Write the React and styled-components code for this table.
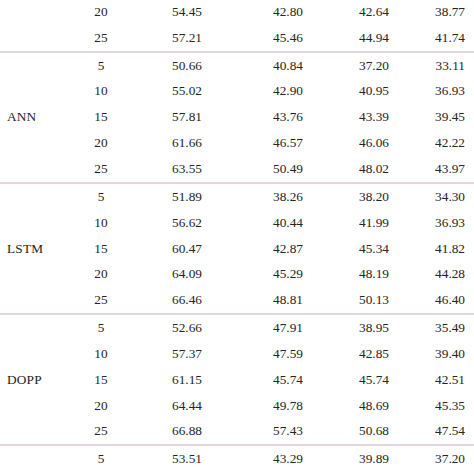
import { createGlobalStyle, styled } from "styled-components";

const GlobalStyle = createGlobalStyle`
  html, body {
    margin: 0;
    padding: 0;
    background: #ffffff;
    overflow: hidden;
  }
`;

const Table = styled.div`
  width: 474px;
  margin-top: -1px;
  font-family: "Liberation Serif", "Times New Roman", serif;
  font-size: 13.3px;
  color: #242424;
`;

const Group = styled.div`
  display: grid;
  grid-template-columns: 58px 86px 86px 116px 56px 1fr;
  grid-auto-rows: 25.85px;
  border-top: ${(props) => (props.first ? "none" : "2px solid #e2d6da")};
`;

const Label = styled.div`
  grid-column: 1;
  grid-row: ${(props) => `1 / span ${props.span}`};
  display: flex;
  align-items: center;
  padding-left: 7px;
  letter-spacing: 0.2px;
`;

const Cell = styled.div`
  display: flex;
  align-items: center;
  justify-content: ${(props) => (props.last ? "flex-end" : "center")};
  padding-right: ${(props) => (props.last ? "9px" : "0")};
  grid-column: ${(props) => props.col};
`;

const groups = [
  {
    label: "",
    rows: [
      ["20", "54.45", "42.80", "42.64", "38.77"],
      ["25", "57.21", "45.46", "44.94", "41.74"],
    ],
  },
  {
    label: "ANN",
    rows: [
      ["5", "50.66", "40.84", "37.20", "33.11"],
      ["10", "55.02", "42.90", "40.95", "36.93"],
      ["15", "57.81", "43.76", "43.39", "39.45"],
      ["20", "61.66", "46.57", "46.06", "42.22"],
      ["25", "63.55", "50.49", "48.02", "43.97"],
    ],
  },
  {
    label: "LSTM",
    rows: [
      ["5", "51.89", "38.26", "38.20", "34.30"],
      ["10", "56.62", "40.44", "41.99", "36.93"],
      ["15", "60.47", "42.87", "45.34", "41.82"],
      ["20", "64.09", "45.29", "48.19", "44.28"],
      ["25", "66.46", "48.81", "50.13", "46.40"],
    ],
  },
  {
    label: "DOPP",
    rows: [
      ["5", "52.66", "47.91", "38.95", "35.49"],
      ["10", "57.37", "47.59", "42.85", "39.40"],
      ["15", "61.15", "45.74", "45.74", "42.51"],
      ["20", "64.44", "49.78", "48.69", "45.35"],
      ["25", "66.88", "57.43", "50.68", "47.54"],
    ],
  },
  {
    label: "",
    rows: [["5", "53.51", "43.29", "39.89", "37.20"]],
  },
];

export default function App() {
  return (
    <>
      <GlobalStyle />
      <Table>
        {groups.map((g, gi) => (
          <Group key={gi} first={gi === 0}>
            <Label span={g.rows.length}>{g.label}</Label>
            {g.rows.map((r) =>
              r.map((v, ci) => (
                <Cell key={r[0] + ci} col={ci + 2} last={ci === 4}>
                  {v}
                </Cell>
              ))
            )}
          </Group>
        ))}
      </Table>
    </>
  );
}
